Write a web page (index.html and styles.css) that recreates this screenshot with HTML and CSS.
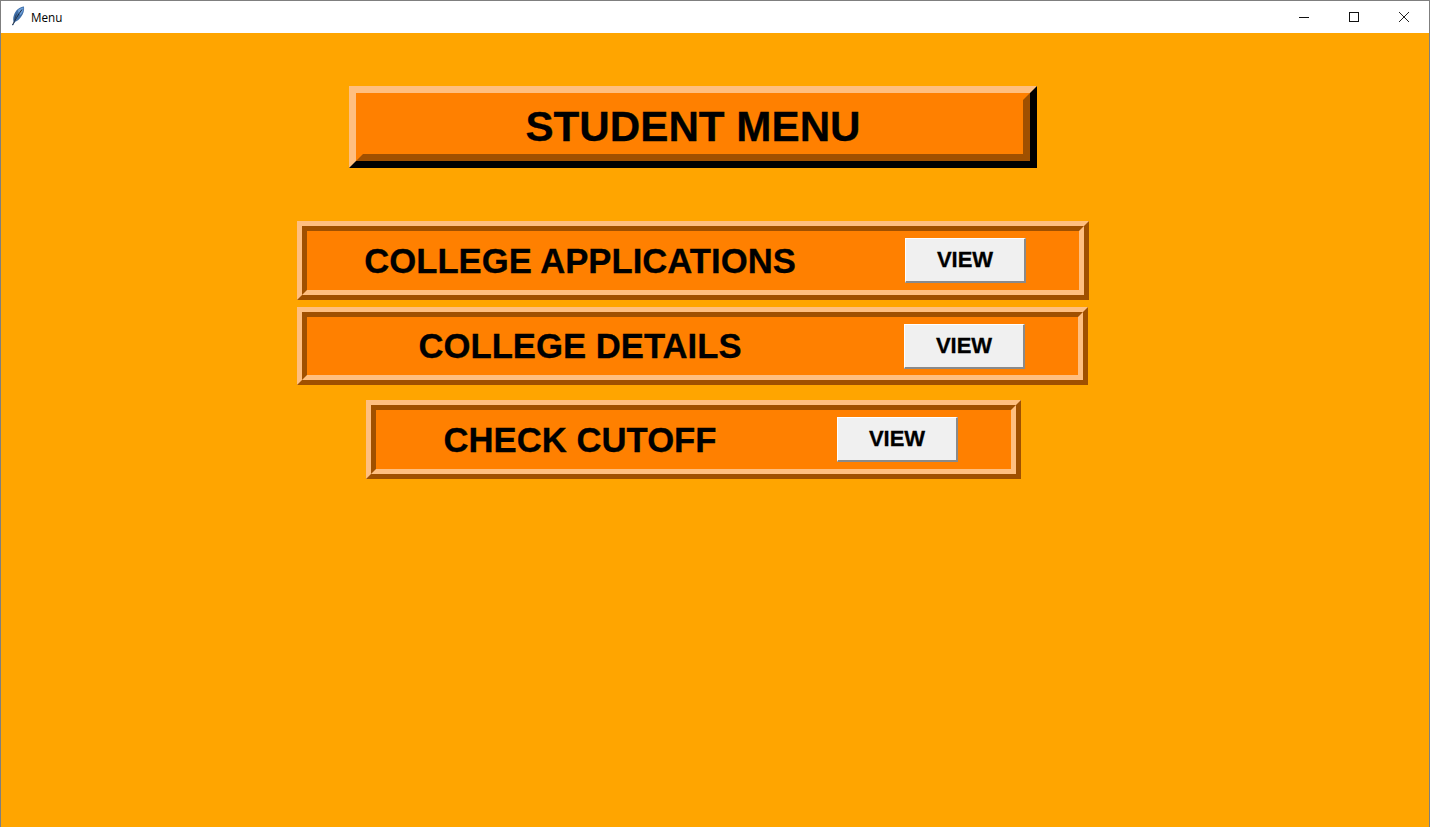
FILE: index.html
```html
<!DOCTYPE html>
<html>
<head>
    <meta charset="utf-8" />
    <title>Menu</title>
    <link rel="stylesheet" href="styles.css">
</head>
<body>
    <div class="window">
        <div class="titlebar">
            <svg class="feather" width="14" height="20" viewBox="0 0 14 20">
                <path d="M1 19 L3 17 C1 13 3 6 7 3 C9 1.500 11 .5 13 .5 C13.500 4 12.500 8 10 11 C8.500 13 6.500 15 4 16 L2 19.500 Z" fill="#3f6fa8" />
                <path d="M7 4 C9 2.500 11 1.500 12.500 1.500 C12.500 4 11.500 7 9.500 9 C8 8 7 6 7 4 Z" fill="#6f9fd8" />
                <path d="M1.500 19 C4 14 7 9 11 3.500" fill="none" stroke="#1d2b3f" stroke-width="1" />
                <path d="M3 17 C3 13 4 10 6 7 L4 15 Z" fill="#2a3f5c" />
            </svg>
            <span class="wintitle">Menu</span>
            <div class="controls">
                <svg class="ctrl" width="10" height="10" viewBox="0 0 10 10"><path d="M0 5.500 H10" stroke="#111" stroke-width="1" /></svg>
                <svg class="ctrl" width="10" height="10" viewBox="0 0 10 10"><rect x=".5" y=".5" width="9" height="9" fill="none" stroke="#111" stroke-width="1" /></svg>
                <svg class="ctrl" width="10" height="10" viewBox="0 0 10 10"><path d="M0 0 L10 10 M10 0 L0 10" stroke="#222" stroke-width="1" /></svg>
            </div>
        </div>

        <div class="content">
            <div class="heading">
                <h1 class="headingInner">STUDENT MENU</h1>
            </div>

            <div class="row row1">
                <div class="rowInner">
                    <span class="label">COLLEGE APPLICATIONS</span>
                    <button class="viewBtn" type="button">VIEW</button>
                </div>
            </div>
            <div class="row row2">
                <div class="rowInner">
                    <span class="label">COLLEGE DETAILS</span>
                    <button class="viewBtn" type="button">VIEW</button>
                </div>
            </div>
            <div class="row row3">
                <div class="rowInner">
                    <span class="label">CHECK CUTOFF</span>
                    <button class="viewBtn" type="button">VIEW</button>
                </div>
            </div>
        </div>
    </div>
</body>
</html>
```

FILE: styles.css
```css
* {
    margin: 0;
    padding: 0;
    box-sizing: border-box;
}

body {
    width: 1430px;
    height: 827px;
    overflow: hidden;
    font-family: "Liberation Sans", Arial, sans-serif;
    color: #000;
}

.window {
    display: flex;
    flex-direction: column;
    height: 827px;
    border: 1px solid #7f7f7f;
    border-bottom: 0;
}

.titlebar {
    display: flex;
    align-items: center;
    flex: none;
    height: 32px;
    padding-left: 10px;
    background: #fff;
}

.feather {
    flex: none;
    margin-bottom: 2px;
}

.wintitle {
    margin-left: 6px;
    margin-bottom: 1px;
    font-family: "Open Sans", "Noto Sans", sans-serif;
    font-size: 11.7px;
    color: #000;
}

.controls {
    display: flex;
    margin-left: auto;
}

.ctrl {
    width: 10px;
    height: 10px;
    margin: 0 20px;
}

.content {
    display: flex;
    flex-direction: column;
    align-items: center;
    flex: 1;
    padding: 53px 44px 0 0;
    background: #ffa500;
}

.heading {
    width: 688px;
    height: 82px;
    margin-bottom: 53px;
    border: 7px solid;
    border-color: #ffbf80 #000 #000 #ffbf80;
}

.headingInner {
    display: flex;
    align-items: center;
    justify-content: center;
    height: 100%;
    border: 7px solid;
    border-color: #ff8000 #a05000 #a05000 #ff8000;
    background: #ff8000;
    font-size: 42.2px;
    font-weight: bold;
    -webkit-text-stroke: 0.3px #000;
}

.row {
    height: 79px;
    border: 5px solid;
    border-color: #ffbf80 #a05000 #a05000 #ffbf80;
}

.rowInner {
    display: flex;
    align-items: center;
    height: 100%;
    border: 5px solid;
    border-color: #a05000 #ffbf80 #ffbf80 #a05000;
    background: #ff8000;
}

.label {
    padding-top: 1px;
    font-size: 34.7px;
    font-weight: bold;
    text-align: center;
    white-space: nowrap;
    -webkit-text-stroke: 0.3px #000;
}

.row1 {
    width: 792px;
    margin-bottom: 7px;
}

.row2 {
    width: 791px;
    height: 78px;
    margin-right: 1px;
    margin-bottom: 15px;
}

.row3 {
    width: 655px;
    margin-left: 1px;
}

.row1 .label,
.row2 .label {
    width: 546px;
}

.row3 .label {
    width: 408px;
}

.viewBtn {
    width: 121px;
    height: 45px;
    margin-left: auto;
    margin-right: 53px;
    border: 1px solid;
    border-color: #fff #8a8a8a #8a8a8a #fff;
    border-right-width: 2px;
    border-bottom-width: 2px;
    background: #f0f0f0;
    font-family: "Liberation Sans", Arial, sans-serif;
    font-size: 22px;
    font-weight: bold;
    color: #000;
    -webkit-text-stroke: 0.3px #000;
}
```
